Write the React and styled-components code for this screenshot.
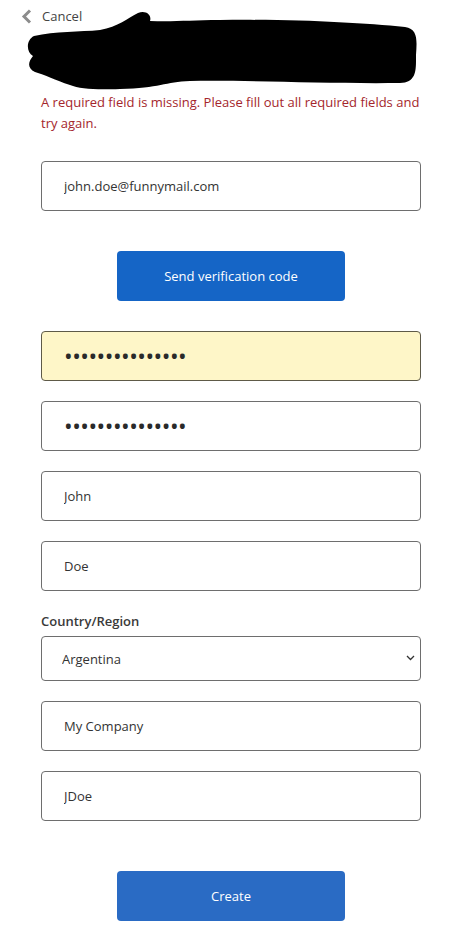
import React from 'react';
import styled, { createGlobalStyle } from 'styled-components';

const GlobalStyle = createGlobalStyle`
  html, body {
    margin: 0;
    padding: 0;
    background: #ffffff;
  }
  body {
    font-family: 'Open Sans', 'Noto Sans', sans-serif;
    color: #333333;
  }
  * {
    box-sizing: border-box;
  }
`;

const Page = styled.div`
  width: 460px;
  padding: 0 39px 20px 41px;
`;

const Header = styled.header`
  position: relative;
  margin-left: -41px;
  margin-right: -39px;
  height: 92px;
`;

const TopBar = styled.div`
  display: flex;
  align-items: center;
  gap: 10px;
  height: 32px;
  padding-left: 21px;
`;

const CancelLink = styled.a`
  font-size: 13px;
  color: #444444;
  text-decoration: none;
  cursor: pointer;
`;

// redacted heading, painted over the title by hand
const Redaction = styled.svg`
  position: absolute;
  top: 0;
  left: 0;
  width: 460px;
  height: 100px;
  pointer-events: none;
`;

const ErrorText = styled.p`
  margin: 0 0 27px;
  font-size: 13px;
  line-height: 21px;
  color: #a4262c;
`;

const Form = styled.form`
  display: flex;
  flex-direction: column;
`;

const Field = styled.input`
  display: block;
  width: 100%;
  height: 50px;
  margin: 0 0 20px;
  padding: 0 22px;
  border: 1px solid ${(p) => (p.$filled ? '#5e5a48' : '#6e6e6e')};
  border-radius: 4px;
  background: ${(p) => (p.$filled ? '#fef6c8' : '#ffffff')};
  font-family: 'Open Sans', 'Noto Sans', sans-serif;
  font-size: 13px;
  color: #333333;
  outline: none;
`;

const Masked = styled(Field)`
  font-size: 23px;
  letter-spacing: -0.5px;
  color: #2a2a2a;
`;

const Button = styled.button`
  display: block;
  width: 228px;
  height: 50px;
  margin: ${(p) => p.$margin};
  border: none;
  border-radius: 4px;
  background: ${(p) => p.$bg};
  color: #ffffff;
  font-family: 'Open Sans', 'Noto Sans', sans-serif;
  font-size: 13px;
  cursor: pointer;
`;

const Label = styled.label`
  display: block;
  margin: 0 0 5px;
  font-size: 13px;
  font-weight: 600;
  line-height: 20px;
  color: #3a3a3a;
`;

const SelectWrap = styled.div`
  position: relative;
  margin-bottom: 20px;
`;

const Select = styled.select`
  display: block;
  width: 100%;
  height: 45px;
  padding: 0 20px;
  border: 1px solid #6e6e6e;
  border-radius: 4px;
  background: #ffffff;
  font-family: 'Open Sans', 'Noto Sans', sans-serif;
  font-size: 13px;
  color: #333333;
  appearance: none;
  outline: none;
`;

const Caret = styled.svg`
  position: absolute;
  right: 6px;
  top: 19px;
  width: 9px;
  height: 6px;
  pointer-events: none;
`;

const App = () => (
  <>
    <GlobalStyle />
    <Page>
      <Header>
        <TopBar>
          <svg width="11" height="15" viewBox="0 0 11 15">
            <path d="M9 1.5 L3 7.5 L9 13.5" fill="none" stroke="#8c8c8c" strokeWidth="3" />
          </svg>
          <CancelLink>Cancel</CancelLink>
        </TopBar>
        <Redaction viewBox="0 0 460 100">
          <path
            d="M34 36 C 55 31, 80 32, 100 30 C 118 27, 128 18, 138 13 C 146 10, 152 15, 150 21
               C 175 22, 190 20, 220 20 C 300 19, 360 23, 405 27 C 418 29, 417 40, 416 55
               C 416 70, 417 82, 400 83 C 330 84, 250 80, 190 81 C 165 82, 160 88, 120 89
               C 95 90, 80 89, 70 85 C 55 80, 45 75, 35 72 C 27 68, 28 62, 33 56
               C 26 52, 26 40, 34 36 Z"
            fill="#000000"
          />
        </Redaction>
      </Header>

      <ErrorText>
        A required field is missing. Please fill out all required fields and try again.
      </ErrorText>

      <Form onSubmit={(e) => e.preventDefault()}>
        <Field type="email" defaultValue="john.doe@funnymail.com" />
        <Button type="button" $bg="#1565c6" $margin="20px auto 30px">
          Send verification code
        </Button>
        <Masked type="password" defaultValue="secretpassword1" $filled />
        <Masked type="password" defaultValue="secretpassword1" />
        <Field type="text" defaultValue="John" />
        <Field type="text" defaultValue="Doe" />
        <Label htmlFor="country">Country/Region</Label>
        <SelectWrap>
          <Select id="country" defaultValue="AR">
            <option value="AR">Argentina</option>
          </Select>
          <Caret viewBox="0 0 9 6">
            <path d="M1 1 L4.5 4.5 L8 1" fill="none" stroke="#333333" strokeWidth="1.3" />
          </Caret>
        </SelectWrap>
        <Field type="text" defaultValue="My Company" />
        <Field type="text" defaultValue="JDoe" />
        <Button type="submit" $bg="#2a6bc4" $margin="30px auto 0">
          Create
        </Button>
      </Form>
    </Page>
  </>
);

export default App;
